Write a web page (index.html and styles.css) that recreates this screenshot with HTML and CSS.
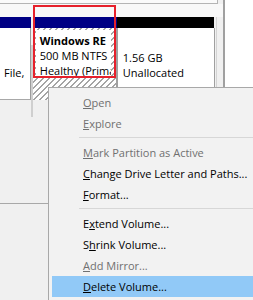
FILE: index.html
```html
<!DOCTYPE html>
<html>
<head>
<meta charset="utf-8">
<title>Disk Management</title>
<link rel="stylesheet" href="styles.css">
</head>
<body>
<div class="screen">
  <div class="disk">
    <div class="area">
      <div class="prev"></div>
      <div class="topgap"></div>
      <div class="parts">
        <div class="part part-a">
          <div class="bar bar-blue"></div>
          <div class="cell cell-a">
            <div class="ln">&nbsp;</div>
            <div class="ln">&nbsp;</div>
            <div class="ln">File,</div>
          </div>
        </div>
        <div class="gap"></div>
        <div class="part part-b">
          <div class="bar bar-blue"></div>
          <div class="cell cell-b">
            <div class="inner">
              <div class="ln bold">Windows RE</div>
              <div class="ln">500 MB NTFS</div>
              <div class="ln">Healthy (Primary Partition)</div>
            </div>
          </div>
        </div>
        <div class="part part-c">
          <div class="bar bar-black"></div>
          <div class="cell cell-c">
            <div class="ln">&nbsp;</div>
            <div class="ln">1.56 GB</div>
            <div class="ln">Unallocated</div>
          </div>
        </div>
        <div class="rest"></div>
      </div>
    </div>
    <div class="side"></div>
  </div>
  <div class="lower"></div>

  <div class="mark"></div>

  <div class="menu">
    <div class="item disabled"><u>O</u>pen</div>
    <div class="item disabled"><u>E</u>xplore</div>
    <div class="sep"></div>
    <div class="item disabled"><u>M</u>ark Partition as Active</div>
    <div class="item"><u>C</u>hange Drive Letter and Paths...</div>
    <div class="item"><u>F</u>ormat...</div>
    <div class="sep"></div>
    <div class="item">E<u>x</u>tend Volume...</div>
    <div class="item">S<u>h</u>rink Volume...</div>
    <div class="item disabled"><u>A</u>dd Mirror...</div>
    <div class="item active"><u>D</u>elete Volume...</div>
  </div>
</div>
</body>
</html>
```

FILE: styles.css
```css
* {
  box-sizing: border-box;
  margin: 0;
  padding: 0;
}

html, body {
  width: 253px;
  height: 300px;
  overflow: hidden;
}

body {
  background: #f0f0f0;
  font-family: "Open Sans", "Noto Sans", "Liberation Sans", sans-serif;
  font-size: 11px;
  color: #000;
}

.screen {
  position: relative;
  width: 253px;
  height: 300px;
  overflow: hidden;
}

/* ---------- disk row ---------- */
.disk {
  display: flex;
  align-items: flex-start;
  height: 100px;
}

.area {
  width: 223px;
  display: flex;
  flex-direction: column;
}

.prev {
  width: 218px;
  height: 4px;
  background: #fafafa;
  border-bottom: 1px solid #b4b4b4;
  border-right: 1px solid #b4b4b4;
}

.topgap {
  height: 13px;
  background: #f8f8f8;
}

.parts {
  display: flex;
  align-items: flex-start;
}

.part {
  display: flex;
  flex-direction: column;
}

.bar {
  height: 11px;
}

.bar-blue {
  background: #000084;
}

.bar-black {
  background: #000;
  margin-right: 1px;
}

.ln {
  height: 15px;
  line-height: 15px;
  white-space: nowrap;
}

.bold {
  font-weight: 700;
}

.cell {
  background: #fff;
  overflow: hidden;
}

.part-a {
  width: 31px;
}

.cell-a {
  height: 72px;
  padding: 7px 0 0 4px;
  border-right: 1px solid #9c9c9c;
  border-bottom: 1px solid #a8a8a8;
}

.gap {
  width: 2px;
  height: 72px;
  margin-top: 28px;
  background: #cfcfcf;
}

.part-b {
  width: 84px;
}

.cell-b {
  height: 72px;
  padding: 2px 5px 0 3px;
  border-right: 1px solid #a0a0a0;
  background-color: #fff;
  background-image: repeating-linear-gradient(135deg, #a4a4a4 0 1px, transparent 1px 4.24px);
}

.inner {
  height: 47px;
  background: #fff;
  padding: 3px 0 0 4px;
  overflow: hidden;
}

.part-c {
  width: 99px;
}

.cell-c {
  height: 59px;
  padding: 7px 0 0 5px;
  border-left: 1px solid #a0a0a0;
  border-right: 1px solid #a0a0a0;
}

.rest {
  width: 7px;
  height: 70px;
  border-left: 1px solid #d4d4d4;
  margin-left: 1px;
}

.side {
  width: 30px;
  height: 88px;
  background: #fff;
  border-left: 2px solid #a0a0a0;
  border-bottom: 1px solid #dadada;
}

.lower {
  margin-top: 103px;
  border-top: 1px solid #a8a8a8;
}

/* ---------- annotation ---------- */
.mark {
  position: absolute;
  left: 33px;
  top: 5px;
  width: 83px;
  height: 73px;
  border: 2px solid #e6202b;
}

/* ---------- context menu ---------- */
.menu {
  position: absolute;
  left: 48px;
  top: 87px;
  width: 230px;
  height: 240px;
  background: #f2f2f2;
  border: 1px solid #a8a8a8;
  padding: 4px 3px;
}

.item {
  height: 21px;
  line-height: 21px;
  padding-left: 31px;
  white-space: nowrap;
  color: #000;
}

.item.disabled {
  color: #707070;
}

.item.active {
  background: #91c9f7;
}

.sep {
  height: 1px;
  margin: 3px 0 4px 27px;
  background: #d7d7d7;
}
```
